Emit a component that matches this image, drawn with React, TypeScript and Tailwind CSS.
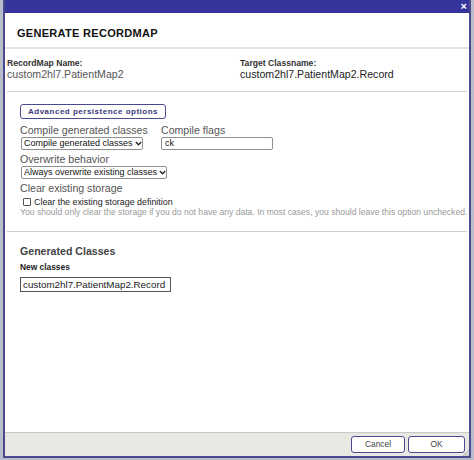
import React from "react";

const font = { fontFamily: '"Liberation Sans", Arial, sans-serif' };

function Chevron() {
  return (
    <svg width="7" height="5" viewBox="0 0 7 5" className="ml-[2px] shrink-0">
      <path d="M0.8 1 L3.5 3.8 L6.2 1" fill="none" stroke="#222" strokeWidth="1.3" />
    </svg>
  );
}

function FakeSelect({ value, width }: { value: string; width: string }) {
  return (
    <div
      className={`flex h-[13px] items-center justify-between rounded-[2px] border border-[#8f8f8f] bg-white pl-[2px] pr-[2px] text-[9px] leading-none text-[#111] ${width}`}
    >
      <span className="whitespace-nowrap">{value}</span>
      <Chevron />
    </div>
  );
}

export default function App() {
  return (
    <div className="relative h-[460px] w-[474px] overflow-hidden bg-[#b9bccb]" style={font}>
      <div className="ml-[3px] flex h-[458px] w-[468px] flex-col border-b-2 border-l-2 border-r-2 border-[#4b4a8e] bg-white">
        {/* title bar */}
        <div className="flex h-[13px] shrink-0 items-center justify-end bg-[#34349a] pr-[2px]">
          <span className="text-[11px] font-bold leading-none text-white">×</span>
        </div>

        {/* header */}
        <div className="flex h-[36px] shrink-0 items-center border-b-2 border-[#e2e2e2] pl-[12px] pt-[6px]">
          <h1 className="text-[11px] font-bold tracking-[0.3px] text-[#111]">GENERATE RECORDMAP</h1>
        </div>

        <div className="flex-1 px-[2px]">
          {/* names */}
          <div className="flex border-b border-[#cfcfcf] pb-[11px] pt-[9px]">
            <div className="w-[233px]">
              <p className="text-[8.6px] font-bold leading-[10px] text-[#333]">RecordMap Name:</p>
              <p className="text-[10.6px] leading-[12px] text-[#555]">custom2hl7.PatientMap2</p>
            </div>
            <div>
              <p className="text-[8.6px] font-bold leading-[10px] text-[#333]">Target Classname:</p>
              <p className="text-[10.6px] leading-[12px] text-[#222]">custom2hl7.PatientMap2.Record</p>
            </div>
          </div>

          {/* advanced */}
          <div className="border-b border-[#cfcfcf] pb-[13px] pl-[13px] pt-[12px]">
            <button className="block h-[15px] w-[146px] whitespace-nowrap rounded-[3px] border border-[#4b4a8e] bg-white text-[8px] font-bold leading-none tracking-[0.5px] text-[#3b3b7b]">
              Advanced persistence options
            </button>

            <div className="mt-[5px] flex">
              <div className="w-[141px]">
                <p className="whitespace-nowrap text-[10.6px] leading-[13px] text-[#555]">Compile generated classes</p>
                <div className="pl-[1px]">
                  <FakeSelect value="Compile generated classes" width="w-[122px]" />
                </div>
              </div>
              <div>
                <p className="text-[10.6px] leading-[13px] text-[#555]">Compile flags</p>
                <div className="flex h-[13px] w-[112px] items-center rounded-[2px] border border-[#8f8f8f] bg-white pl-[3px] text-[9px] leading-none text-[#111]">
                  ck
                </div>
              </div>
            </div>

            <p className="mt-[3px] text-[10.6px] leading-[13px] text-[#555]">Overwrite behavior</p>
            <div className="pl-[1px]">
              <FakeSelect value="Always overwrite existing classes" width="w-[146px]" />
            </div>

            <p className="mt-[3px] text-[10.6px] leading-[13px] text-[#555]">Clear existing storage</p>
            <div className="mt-[2px] flex items-center pl-[3px]">
              <span className="h-[8px] w-[8px] rounded-[1px] border border-[#555] bg-white" />
              <span className="ml-[3px] text-[8.9px] leading-[10px] text-[#222]">Clear the existing storage definition</span>
            </div>
            <p className="whitespace-nowrap text-[8.6px] leading-[11px] text-[#999]">
              You should only clear the storage if you do not have any data. In most cases, you should leave this option unchecked.
            </p>
          </div>

          {/* generated classes */}
          <div className="pl-[13px] pt-[13px]">
            <h2 className="text-[10.6px] font-bold leading-[13px] text-[#444]">Generated Classes</h2>
            <p className="mt-[4px] text-[8.4px] font-bold leading-[10px] text-[#222]">New classes</p>
            <div className="mt-[5px] flex h-[15px] w-[151px] items-center border border-[#555] bg-white pl-[2px] text-[9.8px] leading-none text-[#222]">
              custom2hl7.PatientMap2.Record
            </div>
          </div>
        </div>

        {/* footer */}
        <div className="relative flex h-[24px] shrink-0 items-center justify-end gap-[3px] border-t border-[#c9c9c9] bg-[#e9e8e3] pr-[4px]">
          <button className="h-[17px] w-[54px] rounded-[3px] border border-[#4b4a8e] bg-white text-[8.4px] leading-none text-[#444]">
            Cancel
          </button>
          <button className="h-[17px] w-[57px] rounded-[3px] border border-[#4b4a8e] bg-white text-[8.4px] leading-none text-[#444]">
            OK
          </button>
          <svg width="7" height="7" viewBox="0 0 7 7" className="absolute bottom-[0px] right-[0px]">
            <path d="M7 1 L1 7 M7 3.5 L3.5 7 M7 6 L6 7" stroke="#999" strokeWidth="0.8" />
          </svg>
        </div>
      </div>
    </div>
  );
}
